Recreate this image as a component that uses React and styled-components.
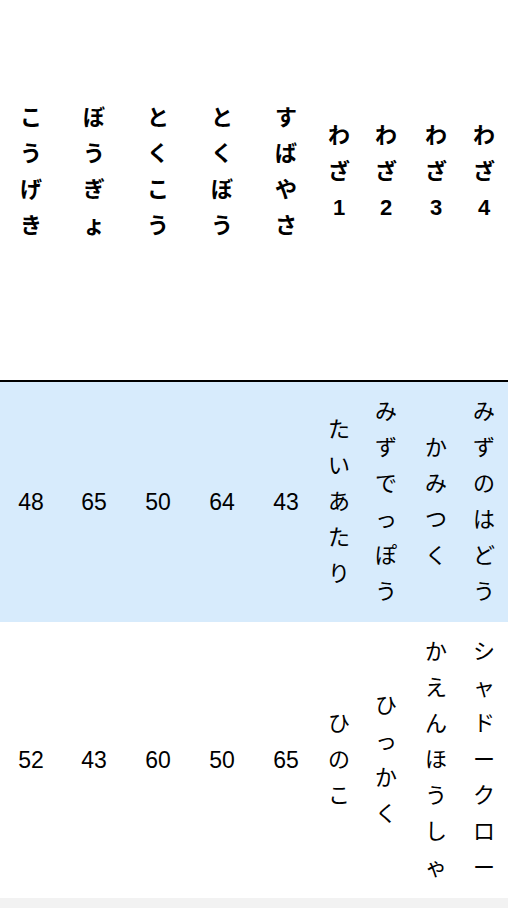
import React from 'react'
import styled, { createGlobalStyle } from 'styled-components'

const GlobalStyle = createGlobalStyle`
  html, body {
    margin: 0;
    padding: 0;
    background: #fff;
  }
  body {
    font-family: "Liberation Sans", "Noto Sans CJK JP", sans-serif;
    color: #000;
  }
`

const Table = styled.table`
  width: 508px;
  table-layout: fixed;
  border-collapse: collapse;
  border-spacing: 0;
  font-size: 23px;
`

const HeadCell = styled.th`
  height: 344px;
  padding: 0 0 36px 0;
  border-bottom: 2px solid #000;
  vertical-align: middle;
  text-align: center;
  font-weight: 700;
`

const Row = styled.tr`
  background: ${p => p.$tone === 'blue' ? '#d7ebfc' : p.$tone === 'grey' ? '#f2f2f2' : '#fff'};
`

const Cell = styled.td`
  padding: 12px 0;
  vertical-align: middle;
  text-align: center;
  font-weight: 400;
`

// narrow column so each character wraps onto its own line
const Stack = styled.span`
  display: inline-block;
  width: 1em;
  line-height: 36px;
  word-break: break-all;
  line-break: anywhere;
  text-align: center;
  font-size: 22px;
`

const columns = [
  { label: 'こうげき', width: 62 },
  { label: 'ぼうぎょ', width: 64 },
  { label: 'とくこう', width: 64 },
  { label: 'とくぼう', width: 64 },
  { label: 'すばやさ', width: 64 },
  { label: 'わざ1', width: 42 },
  { label: 'わざ2', width: 52 },
  { label: 'わざ3', width: 48 },
  { label: 'わざ4', width: 48 },
]

const rows = [
  { tone: 'blue', stats: [48, 65, 50, 64, 43], moves: ['たいあたり', 'みずでっぽう', 'かみつく', 'みずのはどう'] },
  { tone: 'white', stats: [52, 43, 60, 50, 65], moves: ['ひのこ', 'ひっかく', 'かえんほうしゃ', 'シャドークロー'] },
  { tone: 'grey', stats: [49, 49, 65, 65, 45], moves: ['つるのムチ', 'たいあたり', 'はっぱカッター', 'ソーラービーム'] },
]

export default function App() {
  return (
    <>
      <GlobalStyle />
      <Table>
        <colgroup>
          {columns.map(c => <col key={c.label} style={{ width: c.width }} />)}
        </colgroup>
        <thead>
          <tr>
            {columns.map(c => (
              <HeadCell key={c.label}><Stack>{c.label}</Stack></HeadCell>
            ))}
          </tr>
        </thead>
        <tbody>
          {rows.map((r, i) => (
            <Row key={i} $tone={r.tone}>
              {r.stats.map((s, j) => <Cell key={'s' + j}>{s}</Cell>)}
              {r.moves.map((m, j) => <Cell key={'m' + j}><Stack>{m}</Stack></Cell>)}
            </Row>
          ))}
        </tbody>
      </Table>
    </>
  )
}
